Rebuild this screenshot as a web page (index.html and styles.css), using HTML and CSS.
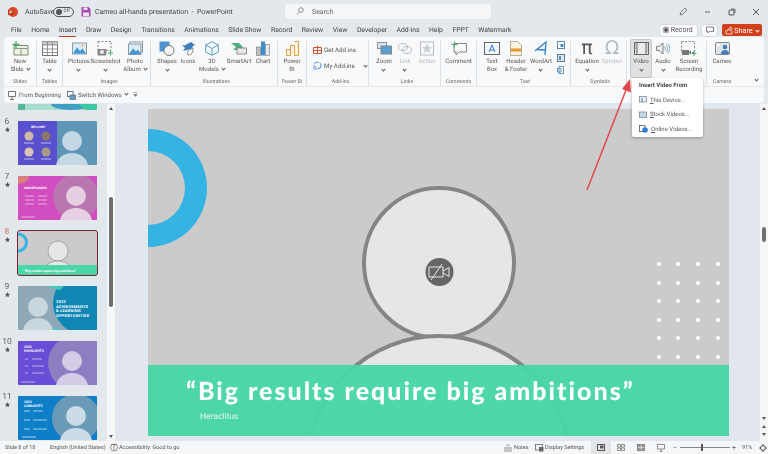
FILE: index.html
```html
<!DOCTYPE html>
<html lang="en">
<head>
<meta charset="utf-8">
<title>Cameo all-hands presentation - PowerPoint</title>
<link rel="stylesheet" href="styles.css">
</head>
<body>
<div class="app">
  <header class="titlebar">
    <svg class="logo" width="12" height="12" viewBox="0 0 12 12"><circle cx="6" cy="6" r="5" fill="#d9482b"/><rect x="1" y="3.500" width="5.500" height="5.500" rx="1" fill="#b7320f"/><path d="M2.800 8V4.800h1.500a.8.8 0 0 1 0 1.800H2.800" fill="none" stroke="#fff" stroke-width=".7"/></svg>
    <span class="autosave">AutoSave</span>
    <span class="toggle"><i class="knob"></i><b>Off</b></span>
    <svg class="save" width="10" height="11" viewBox="0 0 10 11"><path d="M0.500 1h7l2 2v7.500h-9z" fill="#a54bb0"/><rect x="2.500" y="1.500" width="4" height="2.500" fill="#f3dff5"/><rect x="2" y="6.500" width="6" height="3.500" fill="#f3dff5"/></svg>
    <span class="doc-title">Cameo all-hands presentation&nbsp; -&nbsp; PowerPoint</span>
    <div class="search">
      <svg width="8" height="9" viewBox="0 0 8 9"><circle cx="5" cy="3" r="2.300" fill="none" stroke="#777" stroke-width=".8"/><path d="M3.400 4.700 1 7.500" stroke="#777" stroke-width=".8"/></svg>
      <span>Search</span>
    </div>
    <div class="winctl">
      <svg width="10" height="10" viewBox="0 0 10 10"><path d="M2 8 3 5 7 1l2 2-4 4z" fill="none" stroke="#666" stroke-width=".8"/></svg>
      <svg width="8" height="8" viewBox="0 0 8 8"><path d="M1 4h5" stroke="#555" stroke-width=".9"/></svg>
      <svg width="8" height="8" viewBox="0 0 8 8"><rect x="1" y="2" width="5" height="5" rx="1" fill="none" stroke="#444"/><path d="M3 1h4v4" fill="none" stroke="#444" stroke-width=".7"/></svg>
      <svg width="8" height="8" viewBox="0 0 8 8"><path d="M1 1l6 6M7 1 1 7" stroke="#444" stroke-width=".9"/></svg>
    </div>
  </header>

  <nav class="tabs">
    <span>File</span><span>Home</span><span class="active">Insert</span><span>Draw</span><span>Design</span><span>Transitions</span><span>Animations</span><span>Slide Show</span><span>Record</span><span>Review</span><span>View</span><span>Developer</span><span>Add-ins</span><span>Help</span><span>FPPT</span><span>Watermark</span>
    <div class="tab-actions">
      <button class="btn-record"><i class="rec-dot"></i>Record</button>
      <button class="btn-comment"><svg width="8" height="8" viewBox="0 0 8 8"><path d="M.5 1h7v4.500H3.500l-1.500 1.500v-1.500H.5z" fill="none" stroke="#555" stroke-width=".7"/></svg></button>
      <button class="btn-share"><svg width="8" height="9" viewBox="0 0 8 9"><path d="M1 4v4h6V5M2.500 5c0-2 1.500-3 3-3V.8L7.500 3 5.500 4.800V3.500c-1 0-2 .5-3 1.500z" fill="none" stroke="#fff" stroke-width=".7"/></svg>Share<i class="chev light"></i></button>
    </div>
  </nav>

  <section class="card">
    <div class="ribbon">
      <div class="group g-slides"><div class="tools">
        <div class="tool w-33"><svg class="ico" width="18" height="15" viewBox="0 0 18 15"><path d="M3 4.500h14v9.500H3z" fill="#eef0e6" stroke="#7d8e6f"/><path d="M3 7.500h14M10 7.500v6.500" stroke="#8d9c80"/><path d="M5 0v7M1.500 3.500h7" stroke="#49a869" stroke-width="1.300"/></svg><span class="lbl">New<br>Slide<i class="chev in"></i></span></div>
      </div><div class="gname">Slides</div></div>

      <div class="group g-tables"><div class="tools">
        <div class="tool w-26"><svg class="ico" width="16" height="15" viewBox="0 0 16 15"><rect x=".5" y=".5" width="15" height="14" fill="#fff" stroke="#777"/><rect x=".5" y=".5" width="15" height="3.500" fill="#c3c6ca"/><path d="M.5 4h15M.5 8h15M.5 11.500h15M5.500.5v14M10.500.5v14" stroke="#888" stroke-width=".9"/></svg><span class="lbl">Table<br><i class="chev"></i></span></div>
      </div><div class="gname">Tables</div></div>

      <div class="group g-images"><div class="tools">
        <div class="tool w-22"><svg class="ico" width="15" height="12" viewBox="0 0 15 12"><rect x=".5" y=".5" width="14" height="11" fill="#dcecf7" stroke="#8a97a3"/><path d="M1 11 5 5l3 3.500L10.500 6 14 11z" fill="#3f97d6"/><circle cx="10.500" cy="3.200" r="1.200" fill="#f1b56b"/></svg><span class="lbl">Pictures<br><i class="chev"></i></span></div>
        <div class="tool w-31"><svg class="ico" width="17" height="15" viewBox="0 0 17 15"><rect x="1" y=".5" width="13" height="9" fill="none" stroke="#888" stroke-dasharray="2 1.500"/><rect x=".5" y="8" width="9" height="6.500" rx="1" fill="#888"/><circle cx="5" cy="11" r="2" fill="#eee"/><path d="M13.500 9v5.500M11 12h5" stroke="#4ca96d" stroke-width="1"/></svg><span class="lbl">Screenshot<br><i class="chev"></i></span></div>
        <div class="tool w-28"><svg class="ico" width="15" height="14" viewBox="0 0 15 14"><rect x="2" y=".5" width="12.500" height="10" fill="#fff" stroke="#8a97a3"/><rect x=".5" y="2.500" width="12.500" height="10.500" fill="#dcecf7" stroke="#8a97a3"/><path d="M1 12.500 5 7l3 3 2-2 3 4.500z" fill="#3f97d6"/></svg><span class="lbl">Photo<br>Album<i class="chev in"></i></span></div>
      </div><div class="gname">Images</div></div>

      <div class="group g-illus"><div class="tools">
        <div class="tool w-22"><svg class="ico" width="16" height="15" viewBox="0 0 16 15"><rect x=".5" y=".5" width="10" height="10" fill="#4b95d6"/><circle cx="10" cy="9.500" r="5" fill="#f4f5f6" stroke="#666" stroke-width=".9"/></svg><span class="lbl">Shapes<br><i class="chev"></i></span></div>
        <div class="tool w-20"><svg class="ico" width="15" height="15" viewBox="0 0 15 15"><path d="M1 4l3 .5L6 3l2-1 3-1 1 2 2.500.5L12 5l-1 2.500L6 9 2 10l2-3L1 4z" fill="#3f7fc0"/><path d="M7 14c-1.500-3 .5-6 5-6.500 .5 3.500-1.500 6.500-5 6.500z" fill="#fff" stroke="#666" stroke-width=".8"/></svg><span class="lbl">Icons</span></div>
        <div class="tool w-28"><svg class="ico" width="14" height="15" viewBox="0 0 14 15"><path d="M7 .7 13.300 4v7L7 14.300.7 11V4zM.7 4 7 7.500 13.300 4M7 7.500v6.800" fill="#f4f9fc" stroke="#4b95c9" stroke-width=".9"/></svg><span class="lbl">3D<br>Models<i class="chev in"></i></span></div>
        <div class="tool w-26"><svg class="ico" width="16" height="13" viewBox="0 0 16 13"><path d="M0 1h8l4 4-3 3H2l3-3z" fill="#4fae80"/><rect x="6" y="6" width="9.500" height="6" fill="#e8e8e8" stroke="#777" stroke-width=".8"/></svg><span class="lbl">SmartArt</span></div>
        <div class="tool w-22"><svg class="ico" width="14" height="15" viewBox="0 0 14 15"><rect x=".5" y="6" width="4" height="8.500" fill="#bcc0c4" stroke="#777" stroke-width=".6"/><rect x="5" y=".5" width="4" height="14" fill="#3f8ccb"/><rect x="9.500" y="3.500" width="4" height="11" fill="#e7e9ec" stroke="#777" stroke-width=".6"/></svg><span class="lbl">Chart</span></div>
      </div><div class="gname">Illustrations</div></div>

      <div class="group g-bi"><div class="tools">
        <div class="tool w-29"><svg class="ico" width="13" height="15" viewBox="0 0 13 15"><path d="M8.500.5h4v14h-4M4.500 14.500v-10h4v10M.5 14.500V8.500h4v6z" fill="#fbf3e2" stroke="#d89a2e" stroke-width=".9"/></svg><span class="lbl">Power<br>BI</span></div>
      </div><div class="gname">Power BI</div></div>

      <div class="group g-addins">
        <div class="addin-list">
          <div class="addin"><svg width="9" height="9" viewBox="0 0 9 9"><path d="M.5 2.500h8v6h-8zM.5 5.500h8M4.500 .5v8" fill="none" stroke="#d3523a"/></svg><span>Get Add-ins</span></div>
          <div class="addin"><svg width="9" height="9" viewBox="0 0 9 9"><circle cx="4.500" cy="4.500" r="3.500" fill="none" stroke="#3f8ccb" stroke-dasharray="5 1"/><circle cx="2" cy="7" r="1.400" fill="#fff" stroke="#3f8ccb" stroke-width=".7"/></svg><span>My Add-ins</span><i class="chev far"></i></div>
        </div>
        <div class="gname">Add-ins</div>
      </div>

      <div class="group g-links"><div class="tools">
        <div class="tool w-20"><svg class="ico" width="15" height="13" viewBox="0 0 15 13"><rect x=".5" y=".5" width="9" height="6" fill="#dde3e8" stroke="#8a97a3"/><rect x="4" y="4" width="10.500" height="8" fill="#5d9ed1" stroke="#7d8790"/></svg><span class="lbl">Zoom<br><i class="chev"></i></span></div>
        <div class="tool w-22 off"><svg class="ico" width="14" height="13" viewBox="0 0 14 13"><ellipse cx="5" cy="5" rx="4.500" ry="3.500" fill="none" stroke="#b8bcc0"/><ellipse cx="9" cy="8" rx="4.500" ry="3.500" fill="none" stroke="#b8bcc0"/></svg><span class="lbl">Link<br><i class="chev"></i></span></div>
        <div class="tool w-22 off"><svg class="ico" width="14" height="14" viewBox="0 0 14 14"><rect x=".5" y=".5" width="13" height="13" fill="none" stroke="#b8bcc0"/><path d="M7 2l1.500 3.500 3.500.3-2.700 2.300 1 3.500L7 9.800 3.700 11.600l1-3.500L2 5.800l3.500-.3z" fill="#c9ccd0"/></svg><span class="lbl">Action</span></div>
      </div><div class="gname">Links</div></div>

      <div class="group g-comments"><div class="tools">
        <div class="tool w-36"><svg class="ico" width="16" height="14" viewBox="0 0 16 14"><path d="M3 2h12.500v8.500H8l-3 3v-3H3z" fill="none" stroke="#777" stroke-width=".9"/><path d="M3.500 0v6M.5 3h6" stroke="#4ca96d" stroke-width="1"/></svg><span class="lbl">Comment</span></div>
      </div><div class="gname">Comments</div></div>

      <div class="group g-text"><div class="tools">
        <div class="tool w-24"><svg class="ico" width="16" height="13" viewBox="0 0 16 13"><rect x=".5" y=".5" width="15" height="12" fill="#f2f7fb" stroke="#666"/><path d="M5 10 8 3l3 7M6 8h4" fill="none" stroke="#2f7fd0"/></svg><span class="lbl">Text<br>Box</span></div>
        <div class="tool w-24"><svg class="ico" width="12" height="15" viewBox="0 0 12 15"><path d="M.5.500h7l4 4v10H.5z" fill="#fbf3e2" stroke="#a89a7c" stroke-width=".8"/><rect x="1" y="7.500" width="10" height="3" fill="#e5962e"/></svg><span class="lbl">Header<br>&amp; Footer</span></div>
        <div class="tool w-26"><svg class="ico" width="14" height="15" viewBox="0 0 14 15"><path d="M1 10 12 1 11 14M3.500 8.500 11.500 9" fill="none" stroke="#2f7fd0" stroke-width="1.300"/></svg><span class="lbl">WordArt<br><i class="chev"></i></span></div>
        <div class="tool w-14 stack">
          <svg width="8" height="8" viewBox="0 0 8 8"><rect x=".5" y=".5" width="7" height="7" fill="#fff" stroke="#5b8db5"/><rect x="3.500" y="3" width="3" height="3" fill="#3f8ccb"/></svg>
          <svg width="8" height="8" viewBox="0 0 8 8"><rect x=".5" y=".5" width="7" height="7" fill="#dce7ef" stroke="#5b7f9a"/><path d="M3 2v4" stroke="#2f6f9f" stroke-width="1.500"/></svg>
          <svg width="8" height="8" viewBox="0 0 8 8"><path d="M2 .5h4.500v7H2zM.5 2.500H4v3.500H.5z" fill="#fff" stroke="#3f7fae" stroke-width=".8"/></svg>
        </div>
      </div><div class="gname">Text</div></div>

      <div class="group g-symbols"><div class="tools">
        <div class="tool w-26"><span class="glyph">&#960;</span><span class="lbl">Equation<br><i class="chev"></i></span></div>
        <div class="tool w-24 off"><span class="glyph">&#937;</span><span class="lbl">Symbol</span></div>
      </div><div class="gname">Symbols</div></div>

      <div class="group g-media"><div class="tools">
        <div class="tool w-22 pressed"><svg class="ico" width="15" height="13" viewBox="0 0 15 13"><rect x=".5" y=".5" width="14" height="12" fill="#ececec" stroke="#666"/><path d="M3 .5v12M12 .5v12" stroke="#666"/><path d="M1 3h1.500M1 6h1.500M1 9h1.500M12.500 3H14M12.500 6H14M12.500 9H14" stroke="#666" stroke-width=".7"/></svg><span class="lbl">Video<br><i class="chev"></i></span></div>
        <div class="tool w-22"><svg class="ico" width="14" height="13" viewBox="0 0 14 13"><path d="M.5 4.500h2.500L7 1v11L3 8.500H.5z" fill="#eee" stroke="#666" stroke-width=".8"/><path d="M8.500 4.500c1 1 1 3 0 4M10 3c2 2 2 5 0 7M11.500 1.500c3 3 3 7 0 10" fill="none" stroke="#5c8fb5" stroke-width=".8"/></svg><span class="lbl">Audio<br><i class="chev"></i></span></div>
        <div class="tool w-30"><svg class="ico" width="16" height="15" viewBox="0 0 16 15"><rect x=".5" y=".5" width="13" height="11" fill="none" stroke="#888" stroke-dasharray="2 1.500"/><rect x="1" y="9" width="7" height="5" fill="#777"/><path d="M8 11l2-1.500v4L8 12z" fill="#777"/><path d="M13 10v5M10.500 12.500h5" stroke="#4ca96d"/></svg><span class="lbl">Screen<br>Recording</span></div>
      </div><div class="gname"></div></div>

      <div class="group g-camera"><div class="tools">
        <div class="tool w-30"><svg class="ico" width="15" height="13" viewBox="0 0 15 13"><rect x=".5" y=".5" width="14" height="12" rx="1" fill="#e0e4e8" stroke="#888"/><circle cx="10" cy="5" r="2.300" fill="#3f7fc0"/><path d="M6 12c0-3 2-4 4-4s4 1 4 4z" fill="#3f7fc0"/><rect x="2" y="2" width="3" height="2" fill="#fff"/></svg><span class="lbl">Cameo</span></div>
      </div><div class="gname">Camera</div></div>
      <i class="chev collapse"></i>
    </div>
    <div class="quick">
      <svg width="8" height="9" viewBox="0 0 8 9"><path d="M.5.500h7v5h-7zM4 5.500V8M2 8.500h4" fill="none" stroke="#555" stroke-width=".8"/></svg>
      <span class="q-from">From Beginning</span>
      <svg class="q-win" width="9" height="9" viewBox="0 0 9 9"><rect x=".5" y=".5" width="5.500" height="5" fill="#fff" stroke="#555" stroke-width=".8"/><rect x="3" y="4" width="5.500" height="4.500" fill="#5d9ed1" stroke="#555" stroke-width=".6"/></svg>
      <span class="q-switch">Switch Windows<i class="chev in"></i></span>
      <svg class="q-more" width="5" height="6" viewBox="0 0 5 6"><path d="M.5.500h4M.8 2.500 2.500 4.500 4.200 2.500z" fill="#777" stroke="#777" stroke-width=".6"/></svg>
    </div>
  </section>

  <main class="workspace">
    <aside class="thumbs">
      <div class="row partial"><svg class="mini" width="79" height="6" viewBox="0 0 79 6"><rect width="79" height="6" fill="#a7ddcc"/><rect x="0" width="7" height="6" fill="#57b59a"/><ellipse cx="53" cy="0" rx="20" ry="6" fill="#3f9ec2"/><path d="M60 0h19v6H68z" fill="#3bc9a3"/></svg></div>
      <div class="row"><div class="num">6<svg class="star" width="5" height="5" viewBox="0 0 10 10"><path d="M5 0l1.500 3.500L10 4 7.500 6.500 8 10 5 8.300 2 10l.5-3.500L0 4l3.500-.5z"/></svg></div>
        <svg class="mini" width="79" height="44" viewBox="0 0 79 44"><rect width="79" height="44" fill="#5f96b6"/><path d="M0 0h39v44H0z" fill="#5850cc"/><text x="20" y="7" class="t-c">WELCOME</text><circle cx="11" cy="15" r="4.500" fill="#cdb9a8"/><circle cx="28" cy="15" r="4.500" fill="#8d7768"/><circle cx="11" cy="31" r="4.500" fill="#d8c5b8"/><circle cx="28" cy="31" r="4.500" fill="#a99a85"/><path d="M6 22h10M23 22h10M6 38h10M23 38h10" stroke="#cfcaf0" stroke-width=".9"/><circle cx="54" cy="20" r="10" fill="#c3d7e5"/><ellipse cx="54" cy="46" rx="16" ry="14" fill="#c3d7e5"/></svg></div>
      <div class="row"><div class="num">7<svg class="star" width="5" height="5" viewBox="0 0 10 10"><path d="M5 0l1.500 3.500L10 4 7.500 6.500 8 10 5 8.300 2 10l.5-3.500L0 4l3.500-.5z"/></svg></div>
        <svg class="mini" width="79" height="44" viewBox="0 0 79 44"><rect width="79" height="44" fill="#d24dbf"/><path d="M0 0h11c0 5-5 8-11 8z" fill="#d8807f"/><circle cx="58" cy="21" r="23" fill="#b976b0"/><text x="6" y="13" class="t-l">ANNIVERSARIES</text><path d="M7 20h9M20 20h9M7 24h9M20 24h9M7 28h9M20 28h9M3 41h14" stroke="#f2c5ea" stroke-width=".8"/><circle cx="58" cy="20" r="10" fill="#e6cfe2"/><ellipse cx="58" cy="46" rx="16" ry="14" fill="#e6cfe2"/></svg></div>
      <div class="row"><div class="num cur">8<svg class="star" width="5" height="5" viewBox="0 0 10 10"><path d="M5 0l1.500 3.500L10 4 7.500 6.500 8 10 5 8.300 2 10l.5-3.500L0 4l3.500-.5z"/></svg></div>
        <div class="sel"><svg class="mini" width="79" height="44" viewBox="0 0 79 44"><rect width="79" height="44" fill="#cbcbcb"/><path d="M0 3a7 7 0 0 1 0 17" fill="none" stroke="#35b3e4" stroke-width="3"/><circle cx="40" cy="20" r="10" fill="#e6e6e6" stroke="#858585" stroke-width=".6"/><ellipse cx="40" cy="46" rx="17" ry="16" fill="#e6e6e6" stroke="#858585" stroke-width=".6"/><rect y="34" width="79" height="10" fill="#4bd6aa"/><text x="6" y="40.500" class="t-q">&#8220;Big results require big ambitions&#8221;</text></svg></div></div>
      <div class="row"><div class="num">9<svg class="star" width="5" height="5" viewBox="0 0 10 10"><path d="M5 0l1.500 3.500L10 4 7.500 6.500 8 10 5 8.300 2 10l.5-3.500L0 4l3.500-.5z"/></svg></div>
        <svg class="mini" width="79" height="44" viewBox="0 0 79 44"><rect width="79" height="44" fill="#8ea8b8"/><circle cx="66" cy="17" r="31" fill="#0f86b4"/><path d="M30 0h16l-4 4c-5-1-9-2-12-4z" fill="#45c9b0"/><path d="M20 44c6-3 14-4 20-2l4 2z" fill="#5cbfcc"/><circle cx="20" cy="21" r="10" fill="#c8d6de"/><ellipse cx="20" cy="46" rx="15" ry="14" fill="#c8d6de"/><text x="38" y="17" class="t-b">2023</text><text x="38" y="21.500" class="t-b">ACHIEVEMENTS</text><text x="38" y="26" class="t-b">&amp; LEARNING</text><text x="38" y="30.500" class="t-b">OPPORTUNITIES</text></svg></div>
      <div class="row"><div class="num">10<svg class="star" width="5" height="5" viewBox="0 0 10 10"><path d="M5 0l1.500 3.500L10 4 7.500 6.500 8 10 5 8.300 2 10l.5-3.500L0 4l3.500-.5z"/></svg></div>
        <svg class="mini" width="79" height="44" viewBox="0 0 79 44"><rect width="79" height="44" fill="#6a4dd6"/><circle cx="58" cy="22" r="28" fill="#8f7dc2"/><path d="M79 0v44H60V0z" fill="#8f7dc2"/><text x="6" y="7" class="t-h">2023</text><text x="6" y="11" class="t-h">HIGHLIGHTS</text><path d="M7 18h3M14 18h10M7 25h3M14 25h12M7 32h3M14 32h12M3 41h14" stroke="#cfc4ef" stroke-width=".8"/><circle cx="54" cy="20" r="10" fill="#d4cbe6"/><ellipse cx="54" cy="46" rx="16" ry="14" fill="#d4cbe6"/></svg></div>
      <div class="row"><div class="num">11<svg class="star" width="5" height="5" viewBox="0 0 10 10"><path d="M5 0l1.500 3.500L10 4 7.500 6.500 8 10 5 8.300 2 10l.5-3.500L0 4l3.500-.5z"/></svg></div>
        <svg class="mini" width="79" height="44" viewBox="0 0 79 44"><rect width="79" height="44" fill="#0f7ec8"/><circle cx="58" cy="22" r="24" fill="#6a9ab6"/><text x="6" y="7" class="t-h">2023</text><text x="6" y="11" class="t-h">LOWLIGHTS</text><path d="M6 15h6M15 15h10M6 24h6M15 24h14M6 33h6M15 33h14M4 41h14" stroke="#cfe3f2" stroke-width=".8"/><circle cx="58" cy="20" r="10" fill="#c8dbe6"/><ellipse cx="58" cy="46" rx="16" ry="14" fill="#c8dbe6"/></svg></div>
    </aside>
    <div class="pane-scroll"><i class="up"></i><b></b><i class="down"></i></div>
    <div class="canvas">
      <article class="slide">
        <svg class="slide-art" width="581" height="327" viewBox="0 0 581 327">
          <path d="M0 20a59 59 0 0 1 0 118v-22a37 37 0 0 0 0-74z" fill="#35b3e4"/>
          <circle cx="291" cy="154" r="75" fill="#e6e6e6" stroke="#858585" stroke-width="4"/>
          <circle cx="291" cy="359" r="132" fill="#e6e6e6" stroke="#858585" stroke-width="4"/>
          <g fill="#fff">
            <circle cx="511" cy="155" r="2"/><circle cx="530" cy="155" r="2"/><circle cx="550" cy="155" r="2"/><circle cx="570" cy="155" r="2"/>
            <circle cx="511" cy="174" r="2"/><circle cx="530" cy="174" r="2"/><circle cx="550" cy="174" r="2"/><circle cx="570" cy="174" r="2"/>
            <circle cx="511" cy="192" r="2"/><circle cx="530" cy="192" r="2"/><circle cx="550" cy="192" r="2"/><circle cx="570" cy="192" r="2"/>
            <circle cx="511" cy="211" r="2"/><circle cx="530" cy="211" r="2"/><circle cx="550" cy="211" r="2"/><circle cx="570" cy="211" r="2"/>
            <circle cx="511" cy="229" r="2"/><circle cx="530" cy="229" r="2"/><circle cx="550" cy="229" r="2"/><circle cx="570" cy="229" r="2"/>
            <circle cx="511" cy="248" r="2"/><circle cx="530" cy="248" r="2"/><circle cx="550" cy="248" r="2"/><circle cx="570" cy="248" r="2"/>
          </g>
          <circle cx="291.500" cy="163" r="14" fill="#666"/>
          <path d="M281 158h14v10h-14zM295 162l6-3.500v9l-6-3.500M283 171l11-16" fill="none" stroke="#e6e6e6" stroke-width="1"/>
        </svg>
        <div class="band">
          <h1>&#8220;Big results require big ambitions&#8221;</h1>
          <p>Heraclitus</p>
        </div>
      </article>
    </div>
    <div class="main-scroll"><i class="up"></i><b></b><i class="down"></i><i class="page-up"></i><i class="page-down"></i></div>
  </main>

  <footer class="status">
    <span class="s-slide">Slide 8 of 18</span>
    <span class="s-lang">English (United States)</span>
    <svg class="s-acc" width="8" height="9" viewBox="0 0 8 9"><circle cx="4" cy="4.500" r="3.500" fill="none" stroke="#666" stroke-width=".7"/><path d="M1 1.500h6M4 2v5" stroke="#666" stroke-width=".7"/></svg>
    <span class="s-acct">Accessibility: Good to go</span>
    <svg class="s-notes" width="8" height="8" viewBox="0 0 8 8"><path d="M0 4h8M0 6h8M0 8h8M2.500 2 4 .5 5.500 2" fill="none" stroke="#666" stroke-width=".7"/></svg>
    <span class="s-nt">Notes</span>
    <svg class="s-disp" width="9" height="8" viewBox="0 0 9 8"><rect x=".5" y=".5" width="7" height="5.500" fill="none" stroke="#666" stroke-width=".8"/><rect x="4" y="3" width="4.500" height="4.500" fill="#666"/></svg>
    <span class="s-ds">Display Settings</span>
    <div class="views">
      <span class="v on"><svg width="8" height="7" viewBox="0 0 8 7"><rect x=".5" y=".5" width="7" height="6" fill="none" stroke="#555"/><rect x="3" y="1.500" width="3.500" height="3" fill="#555"/></svg></span>
      <span class="v"><svg width="8" height="7" viewBox="0 0 8 7"><path d="M.5.500h3v2.500h-3zM4.500.500h3v2.500h-3zM.5 4h3v2.500h-3zM4.500 4h3v2.500h-3z" fill="none" stroke="#666" stroke-width=".7"/></svg></span>
      <span class="v"><svg width="8" height="7" viewBox="0 0 8 7"><rect x=".5" y=".5" width="7" height="6" fill="#999" stroke="#666" stroke-width=".7"/><path d="M4 .5v6M.5 3.500h7" stroke="#eee" stroke-width=".6"/></svg></span>
      <span class="v"><svg width="8" height="8" viewBox="0 0 8 8"><path d="M.5.500h7v4.500h-7zM4 5v2M2.500 7.500h3" fill="none" stroke="#666" stroke-width=".7"/></svg></span>
    </div>
    <span class="zm">&#8722;</span>
    <div class="slider"><i></i></div>
    <span class="zm plus">+</span>
    <span class="pct">91%</span>
    <svg class="fit" width="8" height="8" viewBox="0 0 8 8"><circle cx="4" cy="4" r="2.500" fill="none" stroke="#555"/><path d="M4 0v2M4 6v2M0 4h2M6 4h2" stroke="#555" stroke-width=".8"/></svg>
  </footer>

  <div class="menu">
    <div class="menu-head">Insert Video From</div>
    <div class="menu-item"><svg width="8" height="8" viewBox="0 0 8 8"><rect x=".5" y=".5" width="7" height="5.500" fill="#e6edf3" stroke="#7b8c9a" stroke-width=".8"/><path d="M3 2v4" stroke="#4f7fa6"/></svg><span><u>T</u>his Device...</span></div>
    <div class="menu-item"><svg width="8" height="8" viewBox="0 0 8 8"><rect x=".5" y="1" width="7" height="5.500" fill="#c9d8e5" stroke="#7b8c9a" stroke-width=".8"/></svg><span><u>S</u>tock Videos...</span></div>
    <div class="menu-item"><svg width="9" height="8" viewBox="0 0 9 8"><rect x=".5" y=".5" width="5.500" height="6" fill="#fff" stroke="#555" stroke-width=".8"/><circle cx="6" cy="5" r="2.800" fill="#2f7fd0"/></svg><span><u>O</u>nline Videos...</span></div>
  </div>
  <svg class="arrow" width="60" height="120" viewBox="0 0 60 120"><path d="M2 114 41 14" stroke="#e2484b" stroke-width="1.500"/><path d="M45 3 37 13l9 3.500z" fill="#e2484b"/></svg>
</div>
</body>
</html>
```

FILE: styles.css
```css
* { box-sizing: border-box; }
html, body { margin: 0; padding: 0; }
body { width: 768px; height: 454px; overflow: hidden; background: #e3e8ed; font-family: "Roboto", "Noto Sans", sans-serif; color: #444; white-space: nowrap; text-rendering: geometricPrecision; }
.app { position: relative; width: 768px; height: 454px; display: flex; flex-direction: column; filter: blur(0.3px); }
button { font: inherit; border: 0; padding: 0; }
i { font-style: normal; display: inline-block; }

.titlebar { flex: none; height: 23px; display: flex; align-items: center; font-size: 7px; color: #444; }
.logo { margin-left: 7px; }
.autosave { margin-left: 6px; width: 28px; }
.toggle { width: 21px; height: 10px; border: 1px solid #555; border-radius: 6px; display: flex; align-items: center; padding-left: 1.5px; font-size: 4.500px; gap: 2px; }
.toggle b { font-weight: 400; }
.knob { width: 6px; height: 6px; border-radius: 50%; background: #555; }
.save { margin-left: 7px; }
.doc-title { margin-left: 4px; width: 190px; }
.search { width: 206px; height: 15px; border-radius: 3px; background: #f5f6f8; display: flex; align-items: center; padding-left: 11px; gap: 8px; font-size: 7px; color: #666; }
.winctl { margin-left: auto; display: flex; align-items: center; gap: 16px; padding-right: 8px; }

.tabs { flex: none; height: 14px; display: flex; align-items: center; gap: 9.500px; padding-left: 11px; font-size: 6.800px; color: #444; }
.tabs .active { color: #333; position: relative; }
.tabs .active::after { content: ""; position: absolute; left: 0; right: 0; top: 10px; height: 1px; background: #c43e1c; }
.tab-actions { margin-left: auto; display: flex; gap: 5px; padding-right: 6px; align-items: center; }
.btn-record { width: 37px; height: 11px; background: #fafbfc; border-radius: 2px; font-size: 7px; color: #555; display: flex; align-items: center; justify-content: center; gap: 2.500px; box-shadow: 0 0 0 .5px #ccd; }
.rec-dot { width: 4px; height: 4px; border-radius: 50%; background: #555; box-shadow: 0 0 0 .6px #fff, 0 0 0 1.200px #777; }
.btn-comment { width: 15px; height: 11px; background: #fafbfc; border-radius: 2px; display: flex; align-items: center; justify-content: center; box-shadow: 0 0 0 .5px #ccd; }
.btn-share { width: 40px; height: 12px; background: #d1401a; border-radius: 2px; color: #fff; font-size: 7.200px; display: flex; align-items: center; justify-content: center; gap: 1.500px; }

.card { flex: none; height: 66px; margin: 0 4px; background: #f8f9fa; border-radius: 4px; display: flex; flex-direction: column; }
.ribbon { flex: none; height: 50px; display: flex; position: relative; border-bottom: 1px solid #e6e8ea; padding-top: 4px; }
.group { display: flex; flex-direction: column; height: 45px; border-right: 1px solid #dde0e3; }
.tools { flex: 1; display: flex; min-height: 0; }
.gname { height: 8px; line-height: 8px; text-align: center; font-size: 5.200px; color: #666; }
.g-slides { width: 33px; } .g-tables { width: 26px; }
.g-images { width: 88px; padding-left: 5px; }
.g-illus { width: 127px; padding-left: 5px; }
.g-bi { width: 29px; } .g-addins { width: 62px; padding-left: 6px; }
.g-links { width: 72px; padding-left: 5px; }
.g-comments { width: 36px; }
.g-text { width: 94px; padding-left: 3px; }
.g-symbols { width: 56px; padding-left: 3px; }
.g-media { width: 80px; padding-left: 3px; }
.g-camera { width: 30px; border-right: 0; }
.tool { display: flex; flex-direction: column; align-items: center; }
.w-14 { width: 14px; } .w-20 { width: 20px; } .w-22 { width: 22px; } .w-24 { width: 24px; } .w-26 { width: 26px; } .w-28 { width: 28px; } .w-29 { width: 29px; } .w-30 { width: 30px; } .w-31 { width: 31px; } .w-33 { width: 33px; } .w-36 { width: 100%; }
.ico { height: 15px; flex: none; }
.lbl { margin-top: 2px; font-size: 6px; line-height: 8px; text-align: center; white-space: nowrap; color: #555; }
.off .lbl, .off .glyph { color: #b6babd; }
.glyph { height: 15px; font-size: 19px; line-height: 15px; font-family: "DejaVu Sans", sans-serif; font-weight: 400; color: #555; }
.pressed { background: #dfe1e3; border: 1px solid #c6c8ca; border-radius: 2px; height: 39px; margin-top: -2px; padding-top: 1px; }
.stack { gap: 4.500px; padding-top: 0; }
.addin-list { flex: 1; display: flex; flex-direction: column; gap: 7px; padding-top: 4px; }
.addin { display: flex; align-items: center; gap: 2px; font-size: 6.200px; color: #555; height: 9px; }
.chev { width: 3px; height: 3px; border-right: .8px solid #555; border-bottom: .8px solid #555; transform: rotate(45deg); }
.chev.in { margin-left: 3px; vertical-align: 1.500px; }
.chev.light { border-color: #fff; margin-left: 2px; }
.chev.far { margin-left: 7px; }
.chev.collapse { position: absolute; right: 6px; top: 41px; }

.quick { flex: 1; display: flex; align-items: center; padding-left: 4px; font-size: 6px; color: #555; }
.q-from { margin-left: 3px; width: 46px; }
.q-win { margin-left: 2px; }
.q-switch { margin-left: 2px; width: 55px; }

.workspace { flex: none; margin-top: 1px; height: 337px; display: flex; }
.thumbs { width: 107px; overflow: hidden; display: flex; flex-direction: column; gap: 11px; }
.row { display: flex; height: 44px; flex: none; padding-left: 18px; position: relative; }
.row.partial { height: 6px; }
.mini { display: block; border-radius: 1px; flex: none; }
.num { position: absolute; left: 0; top: -3px; width: 14px; text-align: center; font-size: 8.500px; line-height: 9px; color: #666; display: flex; flex-direction: column; align-items: center; }
.star { fill: #555; }
.num.cur { color: #c9785a; }
.sel { outline: 1.500px solid #7c2230; border-radius: 2px; height: 44px; }
.t-c, .t-l, .t-b, .t-q, .t-h { font-family: "Roboto", sans-serif; font-weight: 700; fill: #fff; }
.t-c { font-size: 3px; text-anchor: middle; }
.t-l { font-size: 3px; }
.t-h { font-size: 3.400px; }
.t-b { font-size: 4px; letter-spacing: .2px; }
.t-q { font-size: 3.400px; }

.pane-scroll { width: 8px; background: #f6f7f8; position: relative; }
.main-scroll { width: 8px; background: #f5f6f7; position: relative; }
.pane-scroll b, .main-scroll b { position: absolute; left: 2px; width: 4px; border-radius: 2px; background: #6f6f6f; }
.pane-scroll b { top: 93px; height: 110px; }
.main-scroll b { top: 123px; height: 15px; }
.up, .down, .page-up, .page-down { position: absolute; left: 1.500px; width: 0; height: 0; border-left: 2.500px solid transparent; border-right: 2.500px solid transparent; }
.up { top: 3px; border-bottom: 3px solid #555; }
.down { bottom: 3px; border-top: 3px solid #555; }
.main-scroll .down { bottom: 21px; }
.page-up { bottom: 13px; border-bottom: 3px solid #555; }
.page-down { bottom: 5px; border-top: 3px solid #555; }

.canvas { flex: 1; background: #e1e7ed; padding: 5px 0 0 33px; }
.slide { width: 581px; height: 327px; background: #cbcbcb; position: relative; overflow: hidden; display: flex; flex-direction: column; justify-content: flex-end; }
.slide-art { position: absolute; left: 0; top: 0; }
.band { position: relative; height: 71px; background: rgba(72, 214, 168, .97); color: #fff; padding: 9px 0 0 38px; }
.band h1 { margin: 0; font-family: "Lato", sans-serif; font-weight: 900; font-size: 25px; line-height: 34px; letter-spacing: 2px; white-space: nowrap; }
.band p { margin: 3px 0 0 14px; font-size: 8.500px; line-height: 12px; color: #e4f7f0; }

.status { flex: 1; display: flex; align-items: center; background: #f5f6f7; font-size: 5.500px; color: #555; }
.s-slide { margin-left: 5px; width: 45px; }
.s-lang { width: 60px; }
.s-acct { margin-left: 1px; width: 385px; }
.s-notes { margin-right: 2px; }
.s-nt { width: 14px; }
.s-disp { margin: 0 1px 0 7px; }
.s-ds { width: 37px; }
.views { margin-left: 9px; display: flex; }
.v { width: 20px; height: 13px; display: flex; align-items: center; justify-content: center; }
.v.on { background: #e2e4e6; }
.zm { margin-left: 2px; font-size: 7px; width: 7px; }
.slider { width: 50px; height: 1px; background: #888; position: relative; }
.slider i { position: absolute; left: 21px; top: -3px; width: 2px; height: 7px; background: #555; }
.pct { margin-left: 3px; width: 17px; }

.menu { position: absolute; left: 632px; top: 78px; width: 71px; height: 59px; background: #fff; border-radius: 2px; box-shadow: 0 1px 3px rgba(0,0,0,.3); padding: 3px 0 0 7px; font-size: 6px; color: #555; }
.menu-head { font-weight: 700; color: #444; line-height: 10px; margin-bottom: 2px; }
.menu-item { display: flex; align-items: center; gap: 3px; height: 14.500px; }
.arrow { position: absolute; left: 585px; top: 76px; }
```
